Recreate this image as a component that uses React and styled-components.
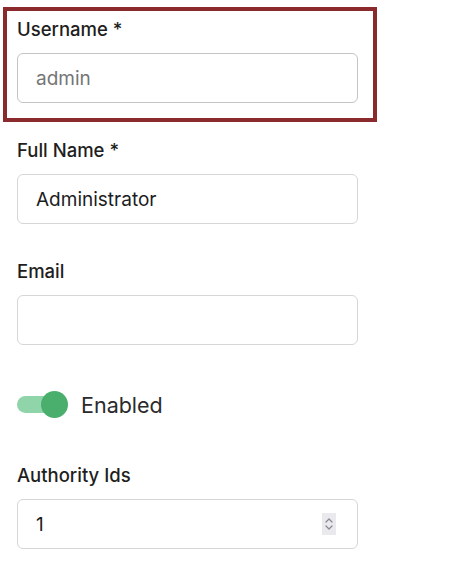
import React from "react";
import styled, { createGlobalStyle } from "styled-components";

const GlobalStyle = createGlobalStyle`
  html, body {
    margin: 0;
    padding: 0;
    background: #ffffff;
  }
  body {
    font-family: Inter, "Noto Sans", "Liberation Sans", sans-serif;
    color: #1f1f1f;
  }
`;

const Form = styled.form`
  display: flex;
  flex-direction: column;
  width: 341px;
  padding: 7px 0 0 17px;
`;

const Field = styled.div`
  display: flex;
  flex-direction: column;
  gap: 13px;
  margin-top: ${p => (p.first ? 0 : 36)}px;
`;

const Highlight = styled.div`
  display: flex;
  flex-direction: column;
  margin-left: -14px;
  width: 356px;
  padding: 7px 0 15px 10px;
  border: 4px solid #8a2a2c;
`;

const Label = styled.label`
  font-size: 18.5px;
  line-height: 22px;
  font-weight: 500;
  color: #1e1e20;
`;

const Box = styled.div`
  display: flex;
  align-items: center;
  box-sizing: border-box;
  width: 341px;
  height: 50px;
  padding: 0 21px 0 18px;
  border: 1px solid ${p => (p.muted ? "#c4c4c4" : "#d6d6d8")};
  border-radius: 6px;
  background: #ffffff;
`;

const Input = styled.input`
  flex: 1;
  min-width: 0;
  border: none;
  outline: none;
  padding: 0;
  background: transparent;
  font-family: inherit;
  font-size: 19px;
  color: #1c1c1e;

  ::placeholder {
    color: #a0a0a2;
  }
`;

const Spinner = styled.span`
  display: flex;
  align-items: center;
  justify-content: center;
  width: 14px;
  height: 22px;
  background: #e9e9ee;
`;

const ToggleRow = styled.div`
  display: flex;
  align-items: center;
  gap: 13px;
  margin: 46px 0;
  height: 27px;
`;

const Track = styled.span`
  position: relative;
  display: block;
  width: 51px;
  height: 27px;
`;

const TrackBar = styled.span`
  position: absolute;
  left: 0;
  right: 4px;
  top: 5px;
  height: 17px;
  border-radius: 9px;
  background: ${p => (p.on ? "#90d4aa" : "#d0d0d0")};
`;

const Thumb = styled.span`
  position: absolute;
  top: 0;
  left: ${p => (p.on ? 24 : 0)}px;
  width: 27px;
  height: 27px;
  border-radius: 50%;
  background: ${p => (p.on ? "#4aae6c" : "#f4f4f4")};
`;

const ToggleText = styled.span`
  font-size: 21.5px;
  color: #2a2a2c;
`;

function Chevrons() {
  return (
    <svg width="10" height="18" viewBox="0 0 10 18" fill="none">
      <path d="M2 7l3-3 3 3" stroke="#8a8a90" strokeWidth="1.3" strokeLinecap="round" strokeLinejoin="round" />
      <path d="M2 11l3 3 3-3" stroke="#8a8a90" strokeWidth="1.3" strokeLinecap="round" strokeLinejoin="round" />
    </svg>
  );
}

function Toggle({ on, label }) {
  return (
    <ToggleRow>
      <Track>
        <TrackBar on={on} />
        <Thumb on={on} />
      </Track>
      <ToggleText>{label}</ToggleText>
    </ToggleRow>
  );
}

export default function App() {
  return (
    <>
      <GlobalStyle />
      <Form onSubmit={e => e.preventDefault()}>
        <Highlight>
          <Field first>
            <Label>Username *</Label>
            <Box muted>
              <Input placeholder="admin" readOnly />
            </Box>
          </Field>
        </Highlight>
        <Field style={{ marginTop: 17 }}>
          <Label>Full Name *</Label>
          <Box>
            <Input defaultValue="Administrator" />
          </Box>
        </Field>
        <Field>
          <Label>Email</Label>
          <Box>
            <Input />
          </Box>
        </Field>
        <Toggle on label="Enabled" />
        <Field first>
          <Label>Authority Ids</Label>
          <Box>
            <Input defaultValue="1" />
            <Spinner>
              <Chevrons />
            </Spinner>
          </Box>
        </Field>
      </Form>
    </>
  );
}
